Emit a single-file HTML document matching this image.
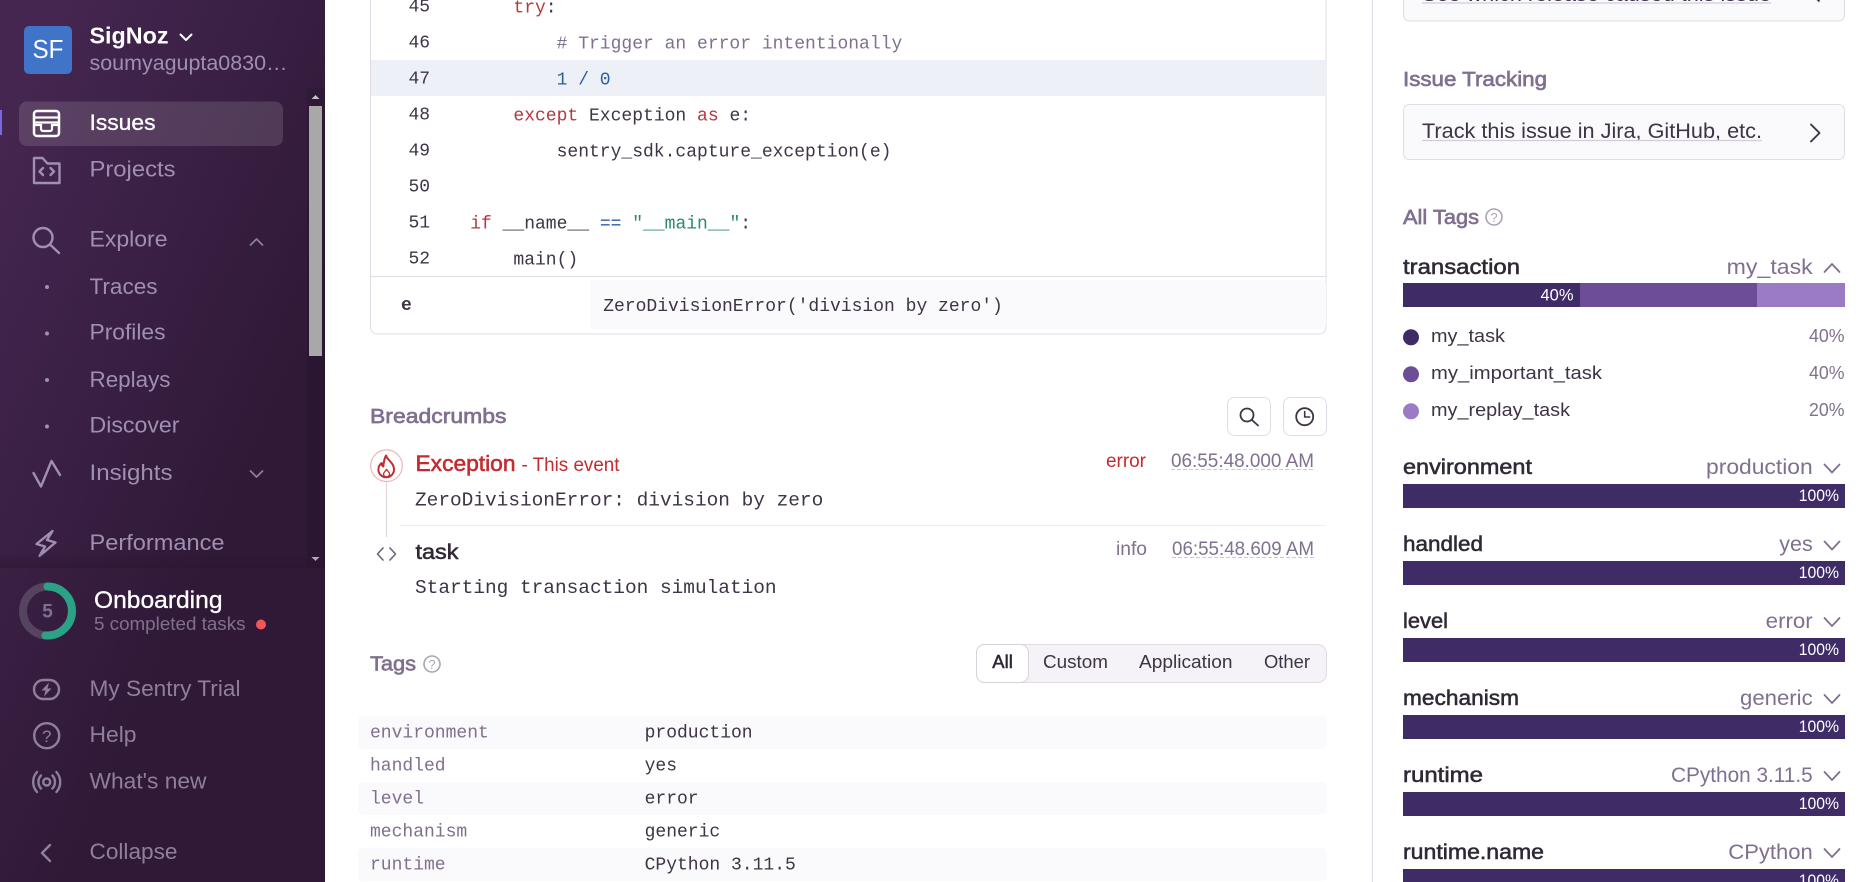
<!DOCTYPE html>
<html><head><meta charset="utf-8"><title>SigNoz Issue</title>
<style>
html,body{margin:0;padding:0;background:#fff;width:1876px;height:882px;overflow:hidden}
#side{position:absolute;left:0;top:0;width:325px;height:882px;background:linear-gradient(294.17deg,#2f1937 35.57%,#452650 92.42%)}
svg{position:absolute;left:0;top:0}
text{font-family:"Liberation Sans",sans-serif;white-space:pre}
.m{font-family:"Liberation Mono",monospace;font-size:18px;fill:#3e3446}
.n{font-family:"Liberation Mono",monospace;font-size:18px;fill:#3e3446}
.nav{font-size:22px;fill:#a08fb0}
.nav2{font-size:22px;fill:#8f7f9d}
.h{font-size:20px;fill:#80708f;stroke:#80708f;stroke-width:.65px}
.k{font-size:21.5px;fill:#2f2936;stroke:#2f2936;stroke-width:.55px}
.v{font-size:21px;fill:#80708f}
.p{font-size:17px;fill:#fff}
.lg{font-size:18px;fill:#3e3446}
.pc{font-size:18px;fill:#80708f}
.ic{fill:none;stroke:#a08fb0;stroke-width:2.4;stroke-linecap:round;stroke-linejoin:round}
.ib{fill:none;stroke:#8f7f9d;stroke-width:2.4;stroke-linecap:round;stroke-linejoin:round}
.sc{fill:none;stroke:#8f7f9d;stroke-width:1.7;stroke-linecap:round;stroke-linejoin:round}
.ch{fill:none;stroke:#80708f;stroke-width:1.8;stroke-linecap:round;stroke-linejoin:round}
</style></head><body>
<div id="side"></div>
<svg width="1876" height="882" viewBox="0 0 1876 882" xmlns="http://www.w3.org/2000/svg">
<defs><linearGradient id="fade" x1="0" y1="0" x2="0" y2="1"><stop offset="0" stop-color="#2a1530" stop-opacity="0"/><stop offset="1" stop-color="#2a1530" stop-opacity=".55"/></linearGradient></defs>

<!-- sidebar -->
<rect x="24" y="26" width="48" height="48" rx="5" fill="#3f74c8"/>
<text x="32.5" y="58" font-size="26" fill="#fff" textLength="31" lengthAdjust="spacingAndGlyphs">SF</text>
<text x="89.5" y="43.5" font-size="23" font-weight="bold" fill="#fff" textLength="79" lengthAdjust="spacingAndGlyphs">SigNoz</text>
<path d="M180.5 34.5l5.5 5.500 5.500-5.500" fill="none" stroke="#fff" stroke-width="2" stroke-linecap="round" stroke-linejoin="round"/>
<text x="89.500" y="70" font-size="21" fill="#a08fb0" textLength="198" lengthAdjust="spacingAndGlyphs">soumyagupta0830…</text>

<rect x="307" y="88" width="18" height="480" fill="#000" opacity=".1"/>
<rect x="309" y="106" width="13" height="250" fill="#a8a8a8"/>
<path d="M315.500 95l4 4h-8z" fill="#c8c0cc"/>
<path d="M315.500 561l4-4h-8z" fill="#d8d0dc"/>

<rect x="0" y="110" width="2" height="25" fill="#7d67e0"/>
<rect x="19" y="101.500" width="264" height="44.500" rx="8" fill="#fff" opacity=".13"/>
<rect x="34" y="111" width="25" height="25" rx="3" fill="none" stroke="#fff" stroke-width="2.500"/>
<path d="M34 117.500h25M34 122.500h25" stroke="#fff" stroke-width="2.200" fill="none"/>
<path d="M34 125h7v4a2 2 0 0 0 2 2h7a2 2 0 0 0 2-2v-4h7" stroke="#fff" stroke-width="2.200" fill="none"/>
<text x="89.500" y="130" font-size="22" fill="#fff" stroke="#fff" stroke-width=".3" textLength="66" lengthAdjust="spacingAndGlyphs">Issues</text>

<path class="ic" d="M34 158h8.500l5 5.500H59.500V183H34z"/>
<path class="ic" d="M43 168l-3.500 3.500 3.500 3.500M50.500 168l3.500 3.500-3.500 3.500"/>
<text class="nav" x="89.500" y="176.500" textLength="86" lengthAdjust="spacingAndGlyphs">Projects</text>

<circle class="ic" cx="43" cy="237.500" r="9.500"/><path class="ic" d="M50 244.500l9 8.500"/>
<text class="nav" x="89.500" y="246.500" textLength="78" lengthAdjust="spacingAndGlyphs">Explore</text>
<path class="sc" d="M250.500 245l6-6 6 6"/>

<circle cx="47" cy="287" r="2" fill="#a08fb0"/>
<text class="nav" x="89.500" y="294" textLength="68" lengthAdjust="spacingAndGlyphs">Traces</text>
<circle cx="47" cy="333.500" r="2" fill="#a08fb0"/>
<text class="nav" x="89.500" y="339.500" textLength="76" lengthAdjust="spacingAndGlyphs">Profiles</text>
<circle cx="47" cy="380" r="2" fill="#a08fb0"/>
<text class="nav" x="89.500" y="386.800" textLength="81" lengthAdjust="spacingAndGlyphs">Replays</text>
<circle cx="47" cy="426.500" r="2" fill="#a08fb0"/>
<text class="nav" x="89.500" y="432.500" textLength="90" lengthAdjust="spacingAndGlyphs">Discover</text>

<path class="ic" d="M33.500 473l7.500 13.500 10.500-25.500 8.500 14"/>
<text class="nav" x="89.500" y="480" textLength="83" lengthAdjust="spacingAndGlyphs">Insights</text>
<path class="sc" d="M250.500 471l6 6 6-6"/>

<path class="ic" d="M52.500 531l-16 13 8.500 2.500-5.500 9.500 16-13.500-8.500-2.500z"/>
<text class="nav" x="89.500" y="549.800" textLength="135" lengthAdjust="spacingAndGlyphs">Performance</text>
<rect x="0" y="552" width="325" height="16" fill="url(#fade)"/>

<circle cx="47.500" cy="611" r="24.500" fill="none" stroke="#55435f" stroke-width="8"/>
<path d="M47.500 586.500a24.500 24.500 0 0 1 0 49h-2" fill="none" stroke="#2ba185" stroke-width="8" stroke-linecap="round"/>
<text x="47.500" y="617.500" font-size="19" font-weight="bold" fill="#80708f" text-anchor="middle">5</text>
<text x="94" y="608" font-size="24" fill="#fff" stroke="#fff" stroke-width=".3" textLength="128.500" lengthAdjust="spacingAndGlyphs">Onboarding</text>
<text x="94" y="630" font-size="18" fill="#80708f" textLength="151.500" lengthAdjust="spacingAndGlyphs">5 completed tasks</text>
<circle cx="261" cy="624.500" r="5" fill="#f55459"/>

<rect class="ib" x="34" y="680" width="25" height="19" rx="9.500"/>
<path d="M49 682.500l-7.500 8h4l-1.500 6 7.500-8h-4z" fill="#8f7f9d"/>
<text class="nav2" x="89.500" y="696" textLength="151" lengthAdjust="spacingAndGlyphs">My Sentry Trial</text>
<circle class="ib" cx="46.700" cy="735.700" r="12.500"/>
<text x="46.700" y="742" font-size="17" fill="#8f7f9d" text-anchor="middle">?</text>
<text class="nav2" x="89.500" y="742" textLength="47" lengthAdjust="spacingAndGlyphs">Help</text>
<circle class="ib" cx="46.700" cy="782" r="3.500"/>
<path class="ib" d="M41 775.500a9.500 9.500 0 0 0 0 13M52.400 775.500a9.500 9.500 0 0 1 0 13M37 772a15 15 0 0 0 0 20M56.400 772a15 15 0 0 1 0 20"/>
<text class="nav2" x="89.500" y="788.500" textLength="117" lengthAdjust="spacingAndGlyphs">What's new</text>
<path class="ib" d="M50 845l-8 8 8 8"/>
<text class="nav2" x="89.500" y="859" textLength="88" lengthAdjust="spacingAndGlyphs">Collapse</text>

<!-- code block -->
<path d="M370.500 -5V327a7 7 0 0 0 7 7H1319a7 7 0 0 0 7-7V-5" fill="#fff" stroke="#e0dce5" stroke-width="1"/>
<rect x="371" y="60" width="955" height="36" fill="#edf0f7"/>
<path d="M371 276.500H1326" stroke="#e0dce5"/>
<rect x="590" y="280" width="736" height="49" rx="4" fill="#faf9fb"/>
<text class="n" x="408.500" y="11.500">45</text>
<text class="n" x="408.500" y="47.500">46</text>
<text class="n" x="408.500" y="83.500">47</text>
<text class="n" x="408.500" y="119.500">48</text>
<text class="n" x="408.500" y="155.500">49</text>
<text class="n" x="408.500" y="191.500">50</text>
<text class="n" x="408.500" y="227.500">51</text>
<text class="n" x="408.500" y="263.500">52</text>
<text class="m" x="513.400" y="12.500"><tspan fill="#b5383f">try</tspan>:</text>
<text class="m" x="556.600" y="48.500" style="fill:#80708f"># Trigger an error intentionally</text>
<text class="m" x="556.600" y="84.500" style="fill:#2a5ea7">1 / 0</text>
<text class="m" x="513.400" y="120.500"><tspan fill="#b5383f">except</tspan> Exception <tspan fill="#b5383f">as</tspan> e:</text>
<text class="m" x="556.600" y="156.500">sentry_sdk.capture_exception(e)</text>
<text class="m" x="470.200" y="228.500"><tspan fill="#b5383f">if</tspan> __name__ <tspan fill="#2a5ea7">==</tspan> <tspan fill="#2a8a6b">"__main__"</tspan>:</text>
<text class="m" x="513.400" y="264.500">main()</text>
<text class="m" x="401" y="310" font-weight="bold">e</text>
<text class="m" x="603.200" y="310.800">ZeroDivisionError('division by zero')</text>

<!-- breadcrumbs -->
<text class="h" x="370" y="423" textLength="136.500" lengthAdjust="spacingAndGlyphs">Breadcrumbs</text>
<rect x="1227.500" y="397.500" width="43" height="38" rx="7" fill="#fff" stroke="#e0dce5"/>
<rect x="1283.500" y="397.500" width="43" height="38" rx="7" fill="#fff" stroke="#e0dce5"/>
<circle cx="1247" cy="415" r="6.500" fill="none" stroke="#3e3446" stroke-width="1.800"/>
<path d="M1252 420l6 5.500" stroke="#3e3446" stroke-width="1.800" stroke-linecap="round"/>
<circle cx="1304.700" cy="416.700" r="8.500" fill="none" stroke="#3e3446" stroke-width="1.800"/>
<path d="M1304.700 411.500v5.500h5" fill="none" stroke="#3e3446" stroke-width="1.600" stroke-linecap="round" stroke-linejoin="round"/>

<path d="M386.500 482V537" stroke="#dcd7e0" stroke-width="1.200"/>
<circle cx="386.500" cy="465.700" r="15.800" fill="#fff" stroke="#eeb5b8" stroke-width="1.200"/>
<path d="M386 455.500c1 4.500 8 7 8 14a7.800 7.800 0 0 1-15.600 0c0-3 1.400-5 3.200-6.500c0 2 .6 3 1.700 3.500c.4-3.500.7-7.500 2.700-11z" fill="none" stroke="#c42b2f" stroke-width="2" stroke-linejoin="round"/>
<path d="M386.500 469c.3 2 3 2.500 3 5a3 3 0 0 1-6 0c0-2 2.500-2.500 3-5z" fill="none" stroke="#c42b2f" stroke-width="1.300"/>
<text x="415.500" y="471" font-size="22" fill="#c42b2f" stroke="#c42b2f" stroke-width=".55" textLength="100" lengthAdjust="spacingAndGlyphs">Exception</text>
<text x="521.500" y="471" font-size="19" fill="#c42b2f" textLength="98" lengthAdjust="spacingAndGlyphs">- This event</text>
<text x="1106" y="467" font-size="19" fill="#c42b2f" textLength="40" lengthAdjust="spacingAndGlyphs">error</text>
<text x="1171" y="467" font-size="19" fill="#80708f" textLength="143" lengthAdjust="spacingAndGlyphs">06:55:48.000 AM</text>
<path d="M1171 469.500H1314" stroke="#cfc8d6" stroke-dasharray="4 2"/>
<text x="415" y="505.500" font-size="19.450" fill="#3e3446" style="font-family:'Liberation Mono',monospace">ZeroDivisionError: division by zero</text>
<path d="M400 525.500H1326" stroke="#f0eef2"/>
<path d="M383 548l-5.500 6 5.500 6M390 548l5.500 6-5.500 6" fill="none" stroke="#71637e" stroke-width="1.600" stroke-linecap="round" stroke-linejoin="round"/>
<text x="415.500" y="559" font-size="21.500" fill="#2f2936" stroke="#2f2936" stroke-width=".55" textLength="43" lengthAdjust="spacingAndGlyphs">task</text>
<text x="1116" y="555" font-size="19" fill="#80708f" textLength="31" lengthAdjust="spacingAndGlyphs">info</text>
<text x="1172" y="555" font-size="19" fill="#80708f" textLength="142" lengthAdjust="spacingAndGlyphs">06:55:48.609 AM</text>
<path d="M1172 557.500H1314" stroke="#cfc8d6" stroke-dasharray="4 2"/>
<text x="415" y="593" font-size="19.450" fill="#3e3446" style="font-family:'Liberation Mono',monospace">Starting transaction simulation</text>

<!-- tags -->
<text class="h" x="370" y="670.500" textLength="46" lengthAdjust="spacingAndGlyphs">Tags</text>
<circle cx="432" cy="664" r="8" fill="none" stroke="#aca3b8" stroke-width="1.600"/>
<text x="432" y="669" font-size="13" fill="#aca3b8" text-anchor="middle">?</text>
<rect x="976.500" y="644.500" width="350" height="38" rx="9" fill="#f5f3f7" stroke="#e0dce5"/>
<rect x="976.500" y="644.500" width="52" height="38" rx="8" fill="#fff" stroke="#d6d1db"/>
<text x="992.300" y="668" font-size="18" fill="#2f2936" stroke="#2f2936" stroke-width=".5" textLength="20.500" lengthAdjust="spacingAndGlyphs">All</text>
<text x="1043" y="668" font-size="18" fill="#3e3446" textLength="65" lengthAdjust="spacingAndGlyphs">Custom</text>
<text x="1139" y="668" font-size="18" fill="#3e3446" textLength="93.500" lengthAdjust="spacingAndGlyphs">Application</text>
<text x="1264" y="668" font-size="18" fill="#3e3446" textLength="46" lengthAdjust="spacingAndGlyphs">Other</text>

<rect x="358" y="716" width="969" height="33" rx="5" fill="#faf9fb"/>
<rect x="358" y="782" width="969" height="33" rx="5" fill="#faf9fb"/>
<rect x="358" y="848" width="969" height="33" rx="5" fill="#faf9fb"/>
<text class="m" x="370" y="737.300" style="fill:#80708f">environment</text>
<text class="m" x="644.600" y="737.300">production</text>
<text class="m" x="370" y="770.300" style="fill:#80708f">handled</text>
<text class="m" x="644.600" y="770.300">yes</text>
<text class="m" x="370" y="803.300" style="fill:#80708f">level</text>
<text class="m" x="644.600" y="803.300">error</text>
<text class="m" x="370" y="836.300" style="fill:#80708f">mechanism</text>
<text class="m" x="644.600" y="836.300">generic</text>
<text class="m" x="370" y="869.300" style="fill:#80708f">runtime</text>
<text class="m" x="644.600" y="869.300">CPython 3.11.5</text>

<!-- right panel -->
<path d="M1372.500 0V882" stroke="#e0dce5"/>
<path d="M1403.500 -6V15a6 6 0 0 0 6 6H1838.500a6 6 0 0 0 6-6V-6z" fill="#faf9fb" stroke="#e0dce5"/>
<text x="1422" y="0.800" font-size="21.500" fill="#3e3446" textLength="349" lengthAdjust="spacingAndGlyphs">See which release caused this issue</text>
<path d="M1422 3H1771" stroke="#d3ccda" stroke-width="1.200"/>
<path d="M1811 -6l8.500 8.500" transform="translate(0,-1)" fill="none" stroke="#3e3446" stroke-width="1.900"/>

<text class="h" x="1403" y="86" textLength="144" lengthAdjust="spacingAndGlyphs">Issue Tracking</text>
<rect x="1403.500" y="104.500" width="441" height="55" rx="6" fill="#faf9fb" stroke="#e0dce5"/>
<text x="1422" y="138" font-size="21.500" fill="#3e3446" textLength="340" lengthAdjust="spacingAndGlyphs">Track this issue in Jira, GitHub, etc.</text>
<path d="M1422 140.500H1762" stroke="#d3ccda" stroke-width="1.200"/>
<path d="M1811 124.500l8.500 8.500-8.500 8.500" fill="none" stroke="#3e3446" stroke-width="1.900" stroke-linecap="round" stroke-linejoin="round"/>

<text class="h" x="1403" y="224" textLength="76" lengthAdjust="spacingAndGlyphs">All Tags</text>
<circle cx="1494" cy="217" r="8" fill="none" stroke="#aca3b8" stroke-width="1.600"/>
<text x="1494" y="222" font-size="13" fill="#aca3b8" text-anchor="middle">?</text>

<text class="k" x="1403" y="274" textLength="117" lengthAdjust="spacingAndGlyphs">transaction</text>
<text class="v" x="1726.700" y="274" textLength="86" lengthAdjust="spacingAndGlyphs">my_task</text>
<path class="ch" d="M1824.500 272l7.500-8 7.500 8"/>
<rect x="1403" y="283" width="177" height="24" fill="#3f2c66"/>
<rect x="1580" y="283" width="177" height="24" fill="#6c4d96"/>
<rect x="1757" y="283" width="88" height="24" fill="#9b7cc4"/>
<text class="p" x="1540.500" y="300.500" textLength="33" lengthAdjust="spacingAndGlyphs">40%</text>

<circle cx="1411" cy="337.300" r="8" fill="#3f2c66"/>
<circle cx="1411" cy="374.300" r="8" fill="#6c4d96"/>
<circle cx="1411" cy="411.300" r="8" fill="#9b7cc4"/>
<text class="lg" x="1431" y="342" textLength="74" lengthAdjust="spacingAndGlyphs">my_task</text>
<text class="lg" x="1431" y="379" textLength="171" lengthAdjust="spacingAndGlyphs">my_important_task</text>
<text class="lg" x="1431" y="416" textLength="139" lengthAdjust="spacingAndGlyphs">my_replay_task</text>
<text class="pc" x="1809" y="342" textLength="35.500" lengthAdjust="spacingAndGlyphs">40%</text>
<text class="pc" x="1809" y="379" textLength="35.500" lengthAdjust="spacingAndGlyphs">40%</text>
<text class="pc" x="1809" y="416" textLength="35.500" lengthAdjust="spacingAndGlyphs">20%</text>

<text class="k" x="1403" y="474" textLength="129" lengthAdjust="spacingAndGlyphs">environment</text>
<text class="v" x="1706" y="474" textLength="106.700" lengthAdjust="spacingAndGlyphs">production</text>
<path class="ch" d="M1824.500 464.500l7.500 8 7.500-8"/>
<rect x="1403" y="484" width="442" height="24" fill="#3f2c66"/>
<text class="p" x="1798.700" y="501" textLength="40.300" lengthAdjust="spacingAndGlyphs">100%</text>

<text class="k" x="1403" y="551" textLength="80" lengthAdjust="spacingAndGlyphs">handled</text>
<text class="v" x="1779.300" y="551" textLength="33.400" lengthAdjust="spacingAndGlyphs">yes</text>
<path class="ch" d="M1824.500 541.500l7.500 8 7.500-8"/>
<rect x="1403" y="561" width="442" height="24" fill="#3f2c66"/>
<text class="p" x="1798.700" y="578" textLength="40.300" lengthAdjust="spacingAndGlyphs">100%</text>

<text class="k" x="1403" y="628" textLength="45" lengthAdjust="spacingAndGlyphs">level</text>
<text class="v" x="1765.700" y="628" textLength="47" lengthAdjust="spacingAndGlyphs">error</text>
<path class="ch" d="M1824.500 618l7.500 8 7.500-8"/>
<rect x="1403" y="638" width="442" height="24" fill="#3f2c66"/>
<text class="p" x="1798.700" y="655" textLength="40.300" lengthAdjust="spacingAndGlyphs">100%</text>

<text class="k" x="1403" y="705" textLength="116" lengthAdjust="spacingAndGlyphs">mechanism</text>
<text class="v" x="1740" y="705" textLength="72.700" lengthAdjust="spacingAndGlyphs">generic</text>
<path class="ch" d="M1824.500 695l7.500 8 7.500-8"/>
<rect x="1403" y="715" width="442" height="24" fill="#3f2c66"/>
<text class="p" x="1798.700" y="732" textLength="40.300" lengthAdjust="spacingAndGlyphs">100%</text>

<text class="k" x="1403" y="782" textLength="80" lengthAdjust="spacingAndGlyphs">runtime</text>
<text class="v" x="1671" y="782" textLength="141.700" lengthAdjust="spacingAndGlyphs">CPython 3.11.5</text>
<path class="ch" d="M1824.500 772l7.500 8 7.500-8"/>
<rect x="1403" y="792" width="442" height="24" fill="#3f2c66"/>
<text class="p" x="1798.700" y="809" textLength="40.300" lengthAdjust="spacingAndGlyphs">100%</text>

<text class="k" x="1403" y="859" textLength="141" lengthAdjust="spacingAndGlyphs">runtime.name</text>
<text class="v" x="1728.300" y="859" textLength="84.400" lengthAdjust="spacingAndGlyphs">CPython</text>
<path class="ch" d="M1824.500 849l7.500 8 7.500-8"/>
<rect x="1403" y="869" width="442" height="24" fill="#3f2c66"/>
<text class="p" x="1798.700" y="886" textLength="40.300" lengthAdjust="spacingAndGlyphs">100%</text>
</svg>
</body></html>
